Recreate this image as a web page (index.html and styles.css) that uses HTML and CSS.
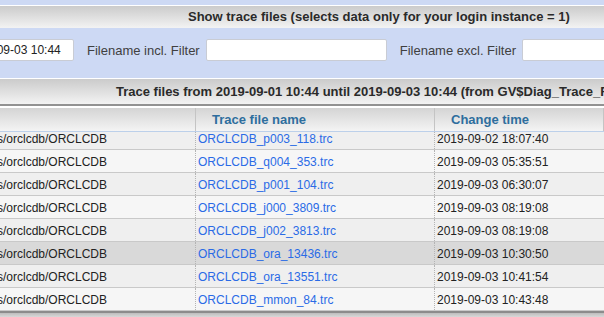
FILE: index.html
```html
<!DOCTYPE html>
<html>
<head>
<meta charset="utf-8">
<link rel="stylesheet" href="styles.css">
</head>
<body>
<div class="page">
  <div class="strip"></div>
  <section class="panel">
    <div class="panel-title title-show">Show trace files (selects data only for your login instance = 1)</div>
    <div class="filters">
      <input class="field field-date" type="text" value="2019-09-03 10:44">
      <label class="label">Filename incl. Filter</label>
      <input class="field field-incl" type="text" value="">
      <label class="label">Filename excl. Filter</label>
      <input class="field field-excl" type="text" value="">
    </div>
  </section>
  <section class="panel panel-grid">
    <div class="panel-title title-list">Trace files from 2019-09-01 10:44 until 2019-09-03 10:44 (from GV$Diag_Trace_File)</div>
    <div class="grid">
      <div class="grid-head">
        <div class="hcell"></div>
        <div class="hcell">Trace file name</div>
        <div class="hcell">Change time</div>
      </div>
      <div class="viewport">
        <div class="row odd first"><div class="cell path">s/orclcdb/ORCLCDB</div><div class="cell"><a class="link" href="#">ORCLCDB_p003_118.trc</a></div><div class="cell">2019-09-02 18:07:40</div></div>
        <div class="row even"><div class="cell path">s/orclcdb/ORCLCDB</div><div class="cell"><a class="link" href="#">ORCLCDB_q004_353.trc</a></div><div class="cell">2019-09-03 05:35:51</div></div>
        <div class="row odd"><div class="cell path">s/orclcdb/ORCLCDB</div><div class="cell"><a class="link" href="#">ORCLCDB_p001_104.trc</a></div><div class="cell">2019-09-03 06:30:07</div></div>
        <div class="row even"><div class="cell path">s/orclcdb/ORCLCDB</div><div class="cell"><a class="link" href="#">ORCLCDB_j000_3809.trc</a></div><div class="cell">2019-09-03 08:19:08</div></div>
        <div class="row odd"><div class="cell path">s/orclcdb/ORCLCDB</div><div class="cell"><a class="link" href="#">ORCLCDB_j002_3813.trc</a></div><div class="cell">2019-09-03 08:19:08</div></div>
        <div class="row hover"><div class="cell path">s/orclcdb/ORCLCDB</div><div class="cell"><a class="link" href="#">ORCLCDB_ora_13436.trc</a></div><div class="cell">2019-09-03 10:30:50</div></div>
        <div class="row odd"><div class="cell path">s/orclcdb/ORCLCDB</div><div class="cell"><a class="link" href="#">ORCLCDB_ora_13551.trc</a></div><div class="cell">2019-09-03 10:41:54</div></div>
        <div class="row even"><div class="cell path">s/orclcdb/ORCLCDB</div><div class="cell"><a class="link" href="#">ORCLCDB_mmon_84.trc</a></div><div class="cell">2019-09-03 10:43:48</div></div>
      </div>
      <div class="grid-foot"></div>
    </div>
  </section>
</div>
</body>
</html>
```

FILE: styles.css
```css
html, body {
  margin: 0;
  padding: 0;
}
body {
  background: #cdd9f4;
  font-family: "Liberation Sans", Arial, Helvetica, sans-serif;
  color: #222;
  overflow: hidden;
}
.page {
  width: 604px;
  height: 317px;
  overflow: hidden;
}
.strip {
  height: 5px;
  background: #cdd9f4;
}
.panel-title {
  border-top: 1px solid #ffffff;
  background: linear-gradient(#cbcbcb, #f3f3f3);
  font-size: 13px;
  font-weight: bold;
  color: #2a2a2a;
  white-space: nowrap;
  overflow: hidden;
}
.title-show {
  height: 22px;
  line-height: 22px;
  padding-left: 188px;
}
.filters {
  display: flex;
  align-items: center;
  padding: 11px 0 17px;
  background: #cdd9f4;
  white-space: nowrap;
}
.field {
  box-sizing: border-box;
  height: 22px;
  border: 1px solid #c9ccd4;
  border-radius: 2px;
  background: #fff;
  font-family: "Liberation Sans", Arial, Helvetica, sans-serif;
  font-size: 13px;
  color: #222;
  padding: 0 4px;
  margin: 0;
  flex: none;
  outline: none;
}
.field-date {
  font-size: 12px;
  width: 113px;
  margin-left: -39px;
}
.field-incl {
  width: 181px;
  margin-left: 6px;
}
.field-excl {
  width: 120px;
  margin-left: 6px;
}
.label {
  font-size: 13px;
  color: #404040;
  margin-left: 13px;
}
.title-list {
  height: 25px;
  line-height: 25px;
  padding-left: 116px;
  border-bottom: 2px solid #929292;
}
.grid {
  background: #ffffff;
  padding-top: 2px;
}
.grid-head {
  display: grid;
  grid-template-columns: 196px 239px 1fr;
  height: 23px;
  background: linear-gradient(#d4d4d4, #f4f4f4);
  border-bottom: 1px solid #bcd0ea;
}
.hcell {
  box-sizing: border-box;
  border-right: 1px solid #c4c4c4;
  padding-left: 16px;
  padding-top: 1px;
  font-size: 13px;
  font-weight: bold;
  color: #2e6e9e;
  line-height: 22px;
  white-space: nowrap;
}
.viewport {
  height: 179px;
  overflow: hidden;
}
.row {
  display: grid;
  grid-template-columns: 196px 239px 1fr;
  height: 23px;
  box-sizing: border-box;
  border-bottom: 1px solid #c9c9c9;
}
.row.first {
  margin-top: -5px;
}
.row.odd {
  background: #efefef;
}
.row.even {
  background: #f6f6f6;
}
.row.hover {
  background: #d9d9d9;
}
.cell {
  box-sizing: border-box;
  border-right: 1px dotted #b4b4b4;
  padding-left: 2px;
  padding-top: 1px;
  font-size: 12px;
  line-height: 22px;
  color: #222;
  white-space: nowrap;
  overflow: hidden;
}
.cell:last-child {
  border-right: none;
}
.cell.path {
  padding-left: 0;
  text-indent: -3px;
}
.link {
  color: #2a6be6;
  text-decoration: none;
}
.grid-foot {
  height: 4px;
  border-top: 2px solid #8c8c8c;
  background: linear-gradient(#bdbdbd, #d8d8d8);
}
```
